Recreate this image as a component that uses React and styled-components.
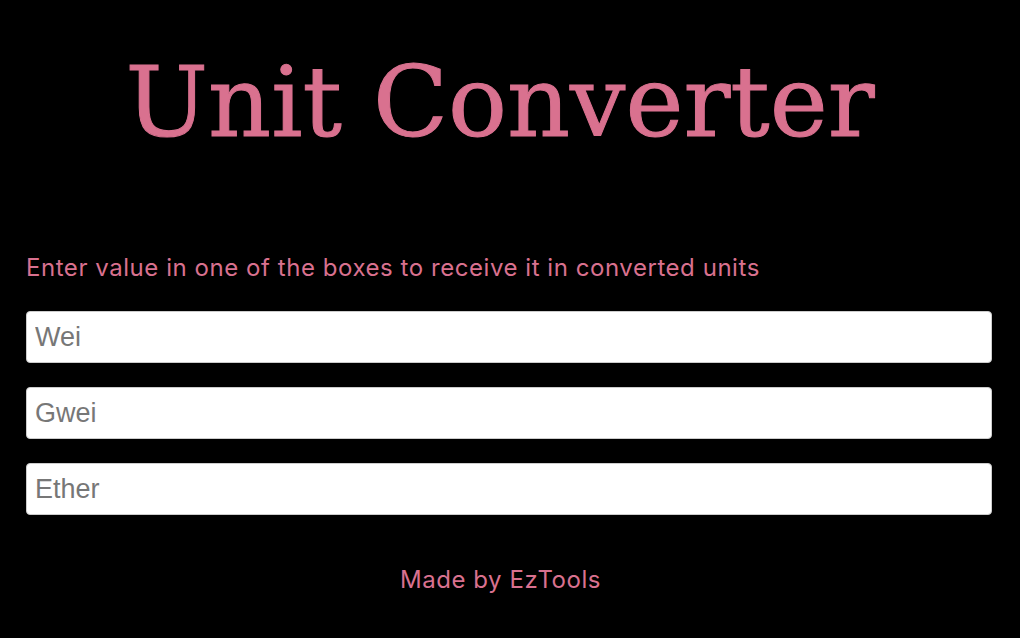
import styled, { createGlobalStyle } from "styled-components";

const GlobalStyle = createGlobalStyle`
    html, body {
        margin: 0;
        background-color: #000;
    }
    body {
        font-family: Inter, "Liberation Sans", Arial, sans-serif;
    }
`;

const Page = styled.div`
    width: 1020px;
    height: 638px;
    box-sizing: border-box;
    padding: 0 28px 0 26px;
    display: flex;
    flex-direction: column;
    color: #d9718f;
`;

const Title = styled.h1`
    margin: 37px 0 0;
    padding-right: 18px;
    font-family: "DejaVu Serif", "Liberation Serif", serif;
    font-weight: normal;
    font-size: 98px;
    line-height: 130px;
    text-align: center;
    -webkit-text-stroke: 1px #d9718f;
`;

const Hint = styled.p`
    margin: 86px 0 0;
    font-size: 24px;
    line-height: 30px;
    letter-spacing: 0.55px;
`;

const Fields = styled.div`
    display: flex;
    flex-direction: column;
    gap: 24px;
    margin-top: 28px;
`;

const Field = styled.input`
    height: 52px;
    box-sizing: border-box;
    padding: 0 8px;
    border: 1px solid #ccc;
    border-radius: 4px;
    background: #fff;
    font-family: "Liberation Sans", Arial, sans-serif;
    font-size: 27px;
    color: #333;
    outline: none;

    &::placeholder {
        color: #777;
    }
`;

const Footer = styled.footer`
    margin-top: 50px;
    padding-right: 17px;
    text-align: center;
    font-size: 24px;
    line-height: 30px;
    letter-spacing: 0.55px;
`;

export default function App() {
    return (
        <>
            <GlobalStyle />
            <Page>
                <Title>Unit Converter</Title>
                <Hint>Enter value in one of the boxes to receive it in converted units</Hint>
                <Fields>
                    <Field placeholder="Wei" />
                    <Field placeholder="Gwei" />
                    <Field placeholder="Ether" />
                </Fields>
                <Footer>Made by EzTools</Footer>
            </Page>
        </>
    );
}
